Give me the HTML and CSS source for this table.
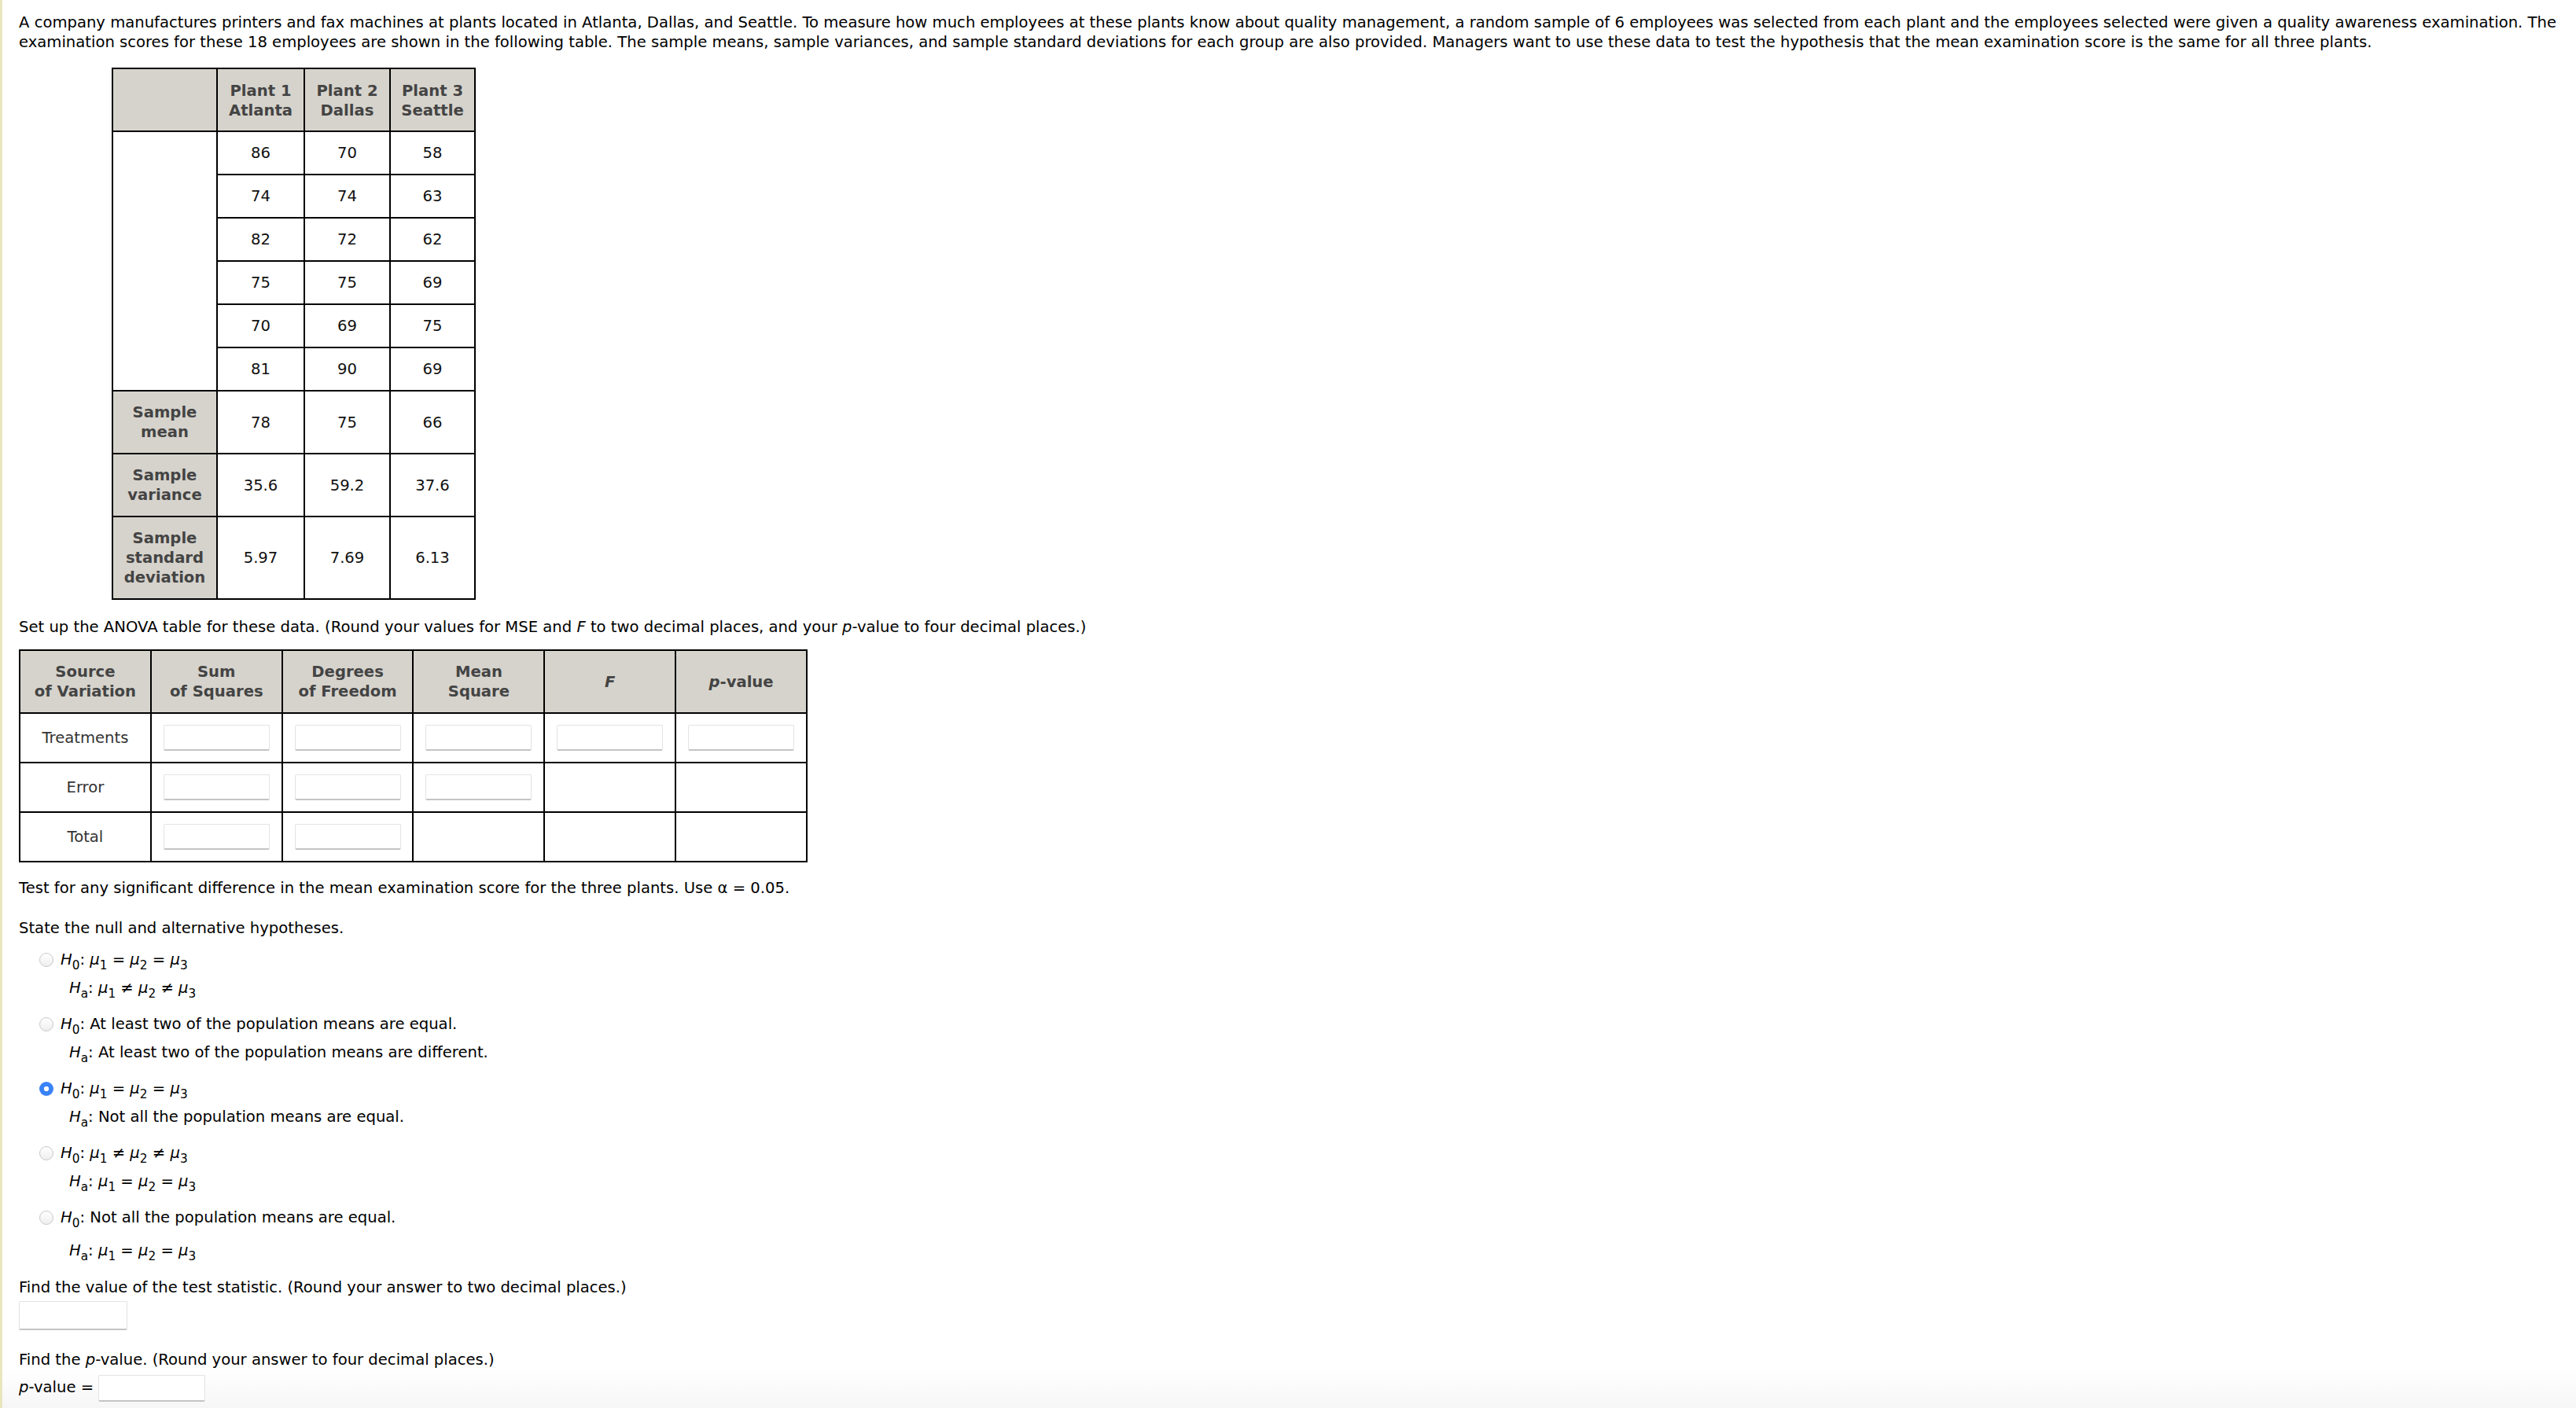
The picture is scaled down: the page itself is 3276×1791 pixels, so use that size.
FILE: index.html
```html
<!DOCTYPE html>
<html lang="en">
<head>
<meta charset="utf-8">
<title>ANOVA question</title>
<link rel="stylesheet" href="styles.css">
</head>
<body>
<div class="page">
  <p class="intro">A company manufactures printers and fax machines at plants located in Atlanta, Dallas, and Seattle. To measure how much employees at these plants know about quality management, a random sample of 6 employees was selected from each plant and the employees selected were given a quality awareness examination. The examination scores for these 18 employees are shown in the following table. The sample means, sample variances, and sample standard deviations for each group are also provided. Managers want to use these data to test the hypothesis that the mean examination score is the same for all three plants.</p>

  <table class="data">
    <colgroup><col class="c-label"><col class="c-p1"><col class="c-p2"><col class="c-p3"></colgroup>
    <tr class="head"><th></th><th>Plant 1<br>Atlanta</th><th>Plant 2<br>Dallas</th><th>Plant 3<br>Seattle</th></tr>
    <tr><td class="blank" rowspan="6"></td><td>86</td><td>70</td><td>58</td></tr>
    <tr><td>74</td><td>74</td><td>63</td></tr>
    <tr><td>82</td><td>72</td><td>62</td></tr>
    <tr><td>75</td><td>75</td><td>69</td></tr>
    <tr><td>70</td><td>69</td><td>75</td></tr>
    <tr><td>81</td><td>90</td><td>69</td></tr>
    <tr><th>Sample<br>mean</th><td>78</td><td>75</td><td>66</td></tr>
    <tr><th>Sample<br>variance</th><td>35.6</td><td>59.2</td><td>37.6</td></tr>
    <tr><th>Sample<br>standard<br>deviation</th><td>5.97</td><td>7.69</td><td>6.13</td></tr>
  </table>

  <p class="setup">Set up the ANOVA table for these data. (Round your values for MSE and <i>F</i> to two decimal places, and your <i>p</i>-value to four decimal places.)</p>

  <table class="anova">
    <tr class="head">
      <th>Source<br>of Variation</th><th>Sum<br>of Squares</th><th>Degrees<br>of Freedom</th><th>Mean<br>Square</th><th><i>F</i></th><th><i>p</i>-value</th>
    </tr>
    <tr><td class="src">Treatments</td><td><span class="box"></span></td><td><span class="box"></span></td><td><span class="box"></span></td><td><span class="box"></span></td><td><span class="box"></span></td></tr>
    <tr><td class="src">Error</td><td><span class="box"></span></td><td><span class="box"></span></td><td><span class="box"></span></td><td></td><td></td></tr>
    <tr><td class="src">Total</td><td><span class="box"></span></td><td><span class="box"></span></td><td></td><td></td><td></td></tr>
  </table>

  <p class="test">Test for any significant difference in the mean examination score for the three plants. Use α = 0.05.</p>

  <p class="state">State the null and alternative hypotheses.</p>

  <div class="options">
    <div class="opt">
      <span class="radio"></span>
      <div class="hyp">
        <div class="h0"><i>H</i><sub>0</sub>: <i>μ</i><sub>1</sub> = <i>μ</i><sub>2</sub> = <i>μ</i><sub>3</sub></div>
        <div class="ha"><i>H</i><sub>a</sub>: <i>μ</i><sub>1</sub> ≠ <i>μ</i><sub>2</sub> ≠ <i>μ</i><sub>3</sub></div>
      </div>
    </div>
    <div class="opt">
      <span class="radio"></span>
      <div class="hyp">
        <div class="h0"><i>H</i><sub>0</sub>: At least two of the population means are equal.</div>
        <div class="ha"><i>H</i><sub>a</sub>: At least two of the population means are different.</div>
      </div>
    </div>
    <div class="opt">
      <span class="radio on"></span>
      <div class="hyp">
        <div class="h0"><i>H</i><sub>0</sub>: <i>μ</i><sub>1</sub> = <i>μ</i><sub>2</sub> = <i>μ</i><sub>3</sub></div>
        <div class="ha"><i>H</i><sub>a</sub>: Not all the population means are equal.</div>
      </div>
    </div>
    <div class="opt">
      <span class="radio"></span>
      <div class="hyp">
        <div class="h0"><i>H</i><sub>0</sub>: <i>μ</i><sub>1</sub> ≠ <i>μ</i><sub>2</sub> ≠ <i>μ</i><sub>3</sub></div>
        <div class="ha"><i>H</i><sub>a</sub>: <i>μ</i><sub>1</sub> = <i>μ</i><sub>2</sub> = <i>μ</i><sub>3</sub></div>
      </div>
    </div>
    <div class="opt last">
      <span class="radio"></span>
      <div class="hyp">
        <div class="h0"><i>H</i><sub>0</sub>: Not all the population means are equal.</div>
        <div class="ha"><i>H</i><sub>a</sub>: <i>μ</i><sub>1</sub> = <i>μ</i><sub>2</sub> = <i>μ</i><sub>3</sub></div>
      </div>
    </div>
  </div>

  <p class="find">Find the value of the test statistic. (Round your answer to two decimal places.)</p>
  <div class="answer"><span class="box"></span></div>

  <p class="find2">Find the <i>p</i>-value. (Round your answer to four decimal places.)</p>
  <p class="pline"><i>p</i>-value = <span class="box"></span></p>
</div>
</body>
</html>
```

FILE: styles.css
```css
html, body {
  margin: 0;
  padding: 0;
  background: #ffffff;
}

body {
  font-family: "DejaVu Sans", Verdana, sans-serif;
  font-size: 19.6px;
  line-height: 25px;
  color: #000;
}

.page {
  border-left: 3px solid #e8e5bf;
  padding: 16px 8px 0 21px;
  min-height: 1775px;
  background: linear-gradient(to bottom, #ffffff 0, #ffffff calc(100% - 50px), #f6f6f6 100%);
}

p {
  margin: 0;
}

.intro {
  margin-bottom: 20px;
}

/* data table */
.data {
  border-collapse: collapse;
  table-layout: fixed;
  width: 461px;
  margin-left: 118px;
}
.c-label { width: 133px; }
.c-p1 { width: 111px; }
.c-p2 { width: 109px; }
.c-p3 { width: 108px; }

.data th, .data td {
  border: 2px solid #000;
  padding: 14px 0;
  text-align: center;
  vertical-align: middle;
}
.data tr.head th {
  padding: 15px 0 13px;
}
.data th {
  background: #d6d3cc;
  color: #444;
  font-weight: bold;
}
.data td {
  color: #111;
}
.data td.blank {
  background: #fff;
}

.setup {
  margin-top: 22px;
  margin-bottom: 16px;
}

/* anova table */
.anova {
  border-collapse: collapse;
  table-layout: fixed;
  width: 1003px;
}
.anova th, .anova td {
  border: 2px solid #000;
  text-align: center;
  vertical-align: middle;
}
.anova th {
  background: #d6d3cc;
  color: #444;
  font-weight: bold;
  padding: 14px 0;
}
.anova td {
  padding: 14px 0;
  height: 33px;
}
.anova td.src {
  color: #333;
}

.box {
  display: inline-block;
  box-sizing: border-box;
  width: 135px;
  height: 33px;
  background: #fff;
  border: 1px solid #e3e3e3;
  border-bottom: 2px solid #c4c4c4;
  border-radius: 2px;
  vertical-align: middle;
}

.test {
  margin-top: 20px;
}
.state {
  margin-top: 26px;
}

/* options */
.options {
  margin-top: 10px;
  padding-left: 26px;
}
.opt {
  display: flex;
  align-items: flex-start;
  margin-bottom: 10px;
}
.radio {
  flex: none;
  box-sizing: border-box;
  width: 18px;
  height: 18px;
  margin-top: 9px;
  margin-right: 9px;
  border-radius: 50%;
  border: 1px solid #c9c9c9;
  background: linear-gradient(#ffffff, #eeeeee);
}
.radio.on {
  border: none;
  background: radial-gradient(circle, #ffffff 0 3px, #3a82f7 3.5px);
}
.hyp {
  line-height: 36px;
}
.ha {
  padding-left: 11px;
}
.opt.last .ha {
  padding-top: 6px;
}
sub {
  font-size: 78%;
  vertical-align: -0.38em;
  line-height: 0;
}
i {
  font-style: italic;
}

.find {
  margin-top: 16px;
}
.answer {
  margin-top: 5px;
  line-height: 0;
}
.answer .box {
  width: 138px;
  height: 37px;
}
.find2 {
  margin-top: 25px;
}
.pline {
  margin-top: 6px;
  line-height: 34px;
}
.pline .box {
  width: 136px;
  height: 34px;
}
```
